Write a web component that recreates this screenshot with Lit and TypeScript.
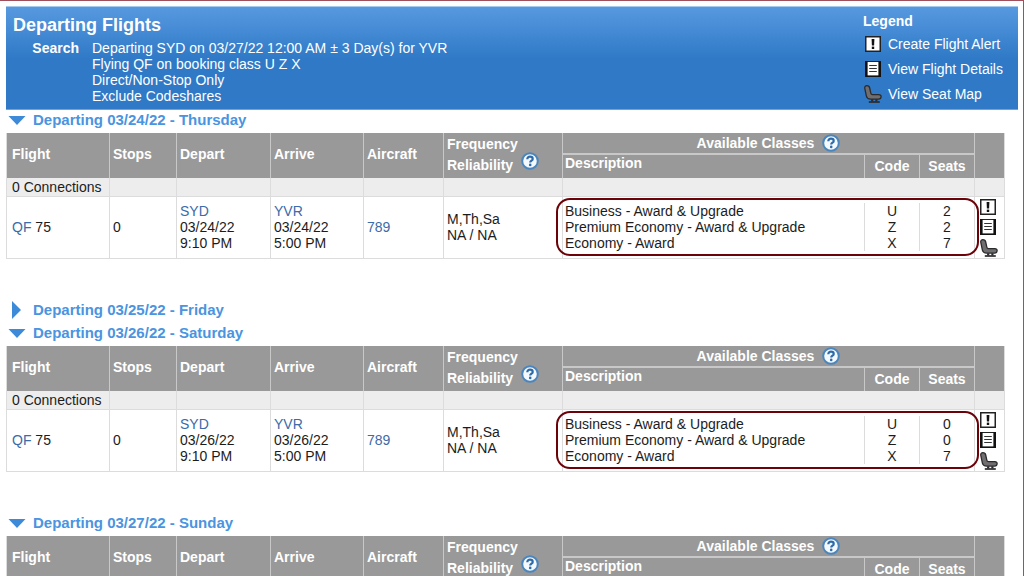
import { LitElement, html, svg, css, nothing } from "lit";
import { customElement, property, state } from "lit/decorators.js";

interface FareClass {
  name: string;
  code: string;
  seats: number;
}

interface Flight {
  carrier: string;
  number: string;
  stops: number;
  from: string;
  departDate: string;
  departTime: string;
  to: string;
  arriveDate: string;
  arriveTime: string;
  aircraft: string;
  days: string;
  reliability: string;
  classes: FareClass[];
}

interface Day {
  label: string;
  open: boolean;
  flights: Flight[];
}

const makeFlight = (date: string, seats: number[]): Flight => ({
  carrier: "QF",
  number: "75",
  stops: 0,
  from: "SYD",
  departDate: date,
  departTime: "9:10 PM",
  to: "YVR",
  arriveDate: date,
  arriveTime: "5:00 PM",
  aircraft: "789",
  days: "M,Th,Sa",
  reliability: "NA / NA",
  classes: [
    { name: "Business - Award & Upgrade", code: "U", seats: seats[0] },
    { name: "Premium Economy - Award & Upgrade", code: "Z", seats: seats[1] },
    { name: "Economy - Award", code: "X", seats: seats[2] },
  ],
});

const alertIcon = html`<svg class="icon" viewBox="0 0 16 16" width="16" height="16" aria-hidden="true">
  <rect x="0.75" y="0.75" width="14.5" height="14.5" fill="#fff" stroke="#222" stroke-width="1.5" />
  <path d="M6.6 3h2.8l-.3 6.4H6.9z" fill="#111" />
  <rect x="6.8" y="10.6" width="2.4" height="2.4" fill="#111" />
</svg>`;

const detailsIcon = html`<svg class="icon" viewBox="0 0 16 16" width="16" height="16" aria-hidden="true">
  <rect x="0.5" y="0.5" width="15" height="15" fill="#fff" stroke="#222" />
  <path d="M0 0h2.6v16H0zM13.4 0H16v16h-2.6z" fill="#111" />
  <path d="M4.2 4.5h7.6M4.2 7.5h7.6M4.2 10.5h7.6" stroke="#333" stroke-width="1.1" />
  <path d="M2 15.2h12" stroke="#111" stroke-width="1.6" />
</svg>`;

const seatIcon = html`<svg class="icon" viewBox="0 0 18 18" width="18" height="18" aria-hidden="true">
  <path
    d="M.8 3.4C.5 1.5 1.500.7 2.900.7c1.600 0 2.500.8 2.800 2.300l1.100 5.200c.2 1 .8 1.400 1.700 1.400h6.300c1.500 0 2.400.8 2.300 2.100-.1 1.500-1 2.400-2.500 2.400H6.600c-2.400 0-3.700-1-4.200-3z"
    fill="#706e6e"
    stroke="#2b2b2e"
    stroke-width="1.300"
  />
  <path d="M8.200 14.200v2.400M12.400 14.200v2.400" stroke="#2b2b2e" stroke-width="2.200" />
  <path d="M4.800 17h11" stroke="#2b2b2e" stroke-width="1.700" />
</svg>`;

const helpIcon = html`<svg class="icon" viewBox="0 0 18 18" width="18" height="18" aria-hidden="true">
  <circle cx="9" cy="9" r="7.8" fill="#f4f9fd" stroke="#4a86bd" stroke-width="2" />
  <path
    d="M6.300 7.200C6.300 5.500 7.400 4.700 9 4.700s2.700.8 2.700 2.200c0 1.800-2.500 1.800-2.500 3.700"
    fill="none"
    stroke="#2f6aa8"
    stroke-width="2.200"
  />
  <circle cx="9.200" cy="12.900" r="1.300" fill="#2f6aa8" />
</svg>`;

const arrow = (open: boolean) => html`<svg class="arrow" viewBox="0 0 20 20" width="20" height="20" aria-hidden="true">
  ${open
    ? svg`<path d="M1.500 6h17l-8.500 9z" fill="#3d8ad8" />`
    : svg`<path d="M5 1v18l9-9z" fill="#3d8ad8" />`}
</svg>`;

@customElement("flight-table")
export class FlightTable extends LitElement {
  @property({ attribute: false }) flights: Flight[] = [];

  static styles = css`
    :host {
      display: block;
    }
    table {
      width: 100%;
      table-layout: fixed;
      border-collapse: separate;
      border-spacing: 0;
    }
    .results {
      border-right: 1px solid #dcdcdc;
      border-bottom: 1px solid #dcdcdc;
    }
    .w-flight { width: 103px; }
    .w-stops { width: 67px; }
    .w-depart { width: 94px; }
    .w-arrive { width: 93px; }
    .w-aircraft { width: 80px; }
    .w-frequency { width: 119px; }
    .w-number { width: 55px; }
    .w-actions { width: 30px; }
    th {
      box-sizing: border-box;
      padding: 0 2px 2px;
      background: #999;
      color: #fff;
      text-align: left;
      font-weight: bold;
      line-height: 21px;
      border-left: 1px solid #c8c8c8;
    }
    .upper th {
      height: 20px;
    }
    .lower th {
      height: 25px;
      border-top: 2px solid #c8c8c8;
      line-height: 16px;
    }
    .lower .description {
      vertical-align: top;
    }
    .lead {
      padding-left: 5px;
      border-left-color: #dcdcdc;
    }
    .edge {
      padding-left: 3px;
    }
    .upper .group {
      padding: 0;
      text-align: center;
      line-height: 20px;
    }
    .flexline {
      display: flex;
      align-items: center;
      gap: 8px;
    }
    .group .flexline {
      justify-content: center;
      height: 20px;
    }
    .frequency .flexline {
      height: 21px;
    }
    .frequency button {
      margin-bottom: 8px;
    }
    .center {
      text-align: center;
    }
    td {
      box-sizing: border-box;
      padding: 0 3px;
      line-height: 16px;
      border-left: 1px solid #dcdcdc;
    }
    td.lead {
      padding-left: 5px;
    }
    .connections td {
      height: 18px;
      background: #ededed;
    }
    .flight td {
      height: 62px;
      padding-bottom: 2px;
      border-top: 1px solid #dcdcdc;
    }
    .flight .classes {
      position: relative;
      padding: 0 0 2px;
    }
    .outline {
      position: absolute;
      inset: 1px -5px 2px -7px;
      border: 2px solid #6b0208;
      border-radius: 14px;
      pointer-events: none;
      z-index: 1;
    }
    .fares .fare td {
      height: 16px;
      border-top: 0;
      padding: 0 2px;
    }
    .fares .fare .name {
      border-left: 0;
    }
    .flight .actions {
      padding: 0 0 0 5px;
    }
    .stack {
      display: flex;
      flex-direction: column;
      gap: 4px;
    }
    a {
      color: #3b6ba8;
      text-decoration: none;
    }
    button {
      display: block;
      padding: 0;
      border: 0;
      background: none;
      line-height: 0;
      cursor: pointer;
    }
    .icon {
      display: block;
    }
  `;

  private renderFlight(f: Flight) {
    return html`<tr class="flight">
      <td class="lead"><a href="#carrier">${f.carrier}</a> ${f.number}</td>
      <td>${f.stops}</td>
      <td><a href="#airport">${f.from}</a><br />${f.departDate}<br />${f.departTime}</td>
      <td><a href="#airport">${f.to}</a><br />${f.arriveDate}<br />${f.arriveTime}</td>
      <td><a href="#aircraft">${f.aircraft}</a></td>
      <td>${f.days}<br />${f.reliability}</td>
      <td class="classes" colspan="3">
        <table class="fares">
          <colgroup>
            <col />
            <col class="w-number" />
            <col class="w-number" />
          </colgroup>
          <tbody>
            ${f.classes.map(
              (c) => html`<tr class="fare">
                <td class="name">${c.name}</td>
                <td class="center">${c.code}</td>
                <td class="center">${c.seats}</td>
              </tr>`
            )}
          </tbody>
        </table>
        <div class="outline"></div>
      </td>
      <td class="actions">
        <div class="stack">
          <button aria-label="Create Flight Alert">${alertIcon}</button>
          <button aria-label="View Flight Details">${detailsIcon}</button>
          <button aria-label="View Seat Map">${seatIcon}</button>
        </div>
      </td>
    </tr>`;
  }

  render() {
    return html`<table class="results">
      <colgroup>
        <col class="w-flight" />
        <col class="w-stops" />
        <col class="w-depart" />
        <col class="w-arrive" />
        <col class="w-aircraft" />
        <col class="w-frequency" />
        <col />
        <col class="w-number" />
        <col class="w-number" />
        <col class="w-actions" />
      </colgroup>
      <thead>
        <tr class="upper">
          <th class="lead" rowspan="2">Flight</th>
          <th class="edge" rowspan="2">Stops</th>
          <th class="edge" rowspan="2">Depart</th>
          <th class="edge" rowspan="2">Arrive</th>
          <th class="edge" rowspan="2">Aircraft</th>
          <th class="edge frequency" rowspan="2">
            Frequency
            <div class="flexline">Reliability <button aria-label="About reliability">${helpIcon}</button></div>
          </th>
          <th class="group" colspan="3">
            <div class="flexline">Available Classes <button aria-label="About classes">${helpIcon}</button></div>
          </th>
          <th rowspan="2"></th>
        </tr>
        <tr class="lower">
          <th class="description">Description</th>
          <th class="center">Code</th>
          <th class="center">Seats</th>
        </tr>
      </thead>
      ${this.flights.length
        ? html`<tbody>
            <tr class="connections">
              <td class="lead">0 Connections</td>
              <td></td>
              <td></td>
              <td></td>
              <td></td>
              <td></td>
              <td colspan="3"></td>
              <td></td>
            </tr>
            ${this.flights.map((f) => this.renderFlight(f))}
          </tbody>`
        : nothing}
    </table>`;
  }
}

@customElement("app-root")
export class AppRoot extends LitElement {
  @state() private days: Day[] = [
    { label: "Departing 03/24/22 - Thursday", open: true, flights: [makeFlight("03/24/22", [2, 2, 7])] },
    { label: "Departing 03/25/22 - Friday", open: false, flights: [] },
    { label: "Departing 03/26/22 - Saturday", open: true, flights: [makeFlight("03/26/22", [0, 0, 7])] },
    { label: "Departing 03/27/22 - Sunday", open: true, flights: [] },
  ];

  static styles = css`
    :host {
      display: block;
      box-sizing: border-box;
      min-height: 100vh;
      padding: 5px 5px 0 6px;
      border-top: 1px solid #a0505a;
      border-right: 1px solid #a0505a;
      background: #fff;
      color: #1c1c1c;
      font: 14px/16px "Liberation Sans", Arial, sans-serif;
    }
    .banner {
      display: flex;
      justify-content: space-between;
      box-sizing: border-box;
      min-height: 104px;
      padding: 6px 0 0 7px;
      border-top: 1px solid #a9c9ec;
      border-bottom: 1px solid #6fa3da;
      background: linear-gradient(#5799e0, #2f79c6 52px);
      color: #fff;
    }
    h1 {
      margin: 0 0 3px;
      font-size: 18px;
      line-height: 24px;
    }
    .search {
      display: grid;
      grid-template-columns: 66px auto;
      column-gap: 13px;
      margin: 0;
    }
    dt {
      font-weight: bold;
      text-align: right;
    }
    dd {
      margin: 0;
    }
    .legend {
      width: 155px;
    }
    h2 {
      margin: 0;
      font-size: 14px;
      line-height: 16px;
    }
    ul {
      margin: 2px 0 0;
      padding: 0;
      list-style: none;
    }
    li {
      display: grid;
      grid-template-columns: 19px auto;
      align-items: center;
      justify-items: center;
      justify-content: start;
      column-gap: 6px;
      height: 25px;
    }
    .icon,
    .arrow {
      display: block;
    }
    .day {
      margin: 0;
      font-size: 15px;
      line-height: 23px;
    }
    .toggle {
      display: flex;
      align-items: center;
      gap: 6px;
      height: 23px;
      padding: 0 0 3px 1px;
      border: 0;
      background: none;
      color: #4a94e0;
      font: inherit;
      line-height: 20px;
      cursor: pointer;
    }
    .results {
      margin: 0 13px 41px 0;
    }
  `;

  private toggle(index: number) {
    this.days = this.days.map((d, i) => (i === index ? { ...d, open: !d.open } : d));
  }

  render() {
    return html`
      <header class="banner">
        <div>
          <h1>Departing Flights</h1>
          <dl class="search">
            <dt>Search</dt>
            <dd>
              Departing SYD on 03/27/22 12:00 AM ± 3 Day(s) for YVR<br />
              Flying QF on booking class U Z X<br />
              Direct/Non-Stop Only<br />
              Exclude Codeshares
            </dd>
          </dl>
        </div>
        <div class="legend">
          <h2>Legend</h2>
          <ul>
            <li>${alertIcon} Create Flight Alert</li>
            <li>${detailsIcon} View Flight Details</li>
            <li>${seatIcon} View Seat Map</li>
          </ul>
        </div>
      </header>
      <main>
        ${this.days.map(
          (d, i) => html`<section>
            <h2 class="day">
              <button class="toggle" aria-expanded=${d.open ? "true" : "false"} @click=${() => this.toggle(i)}>
                ${arrow(d.open)} ${d.label}
              </button>
            </h2>
            ${d.open ? html`<flight-table class="results" .flights=${d.flights}></flight-table>` : nothing}
          </section>`
        )}
      </main>
    `;
  }
}
